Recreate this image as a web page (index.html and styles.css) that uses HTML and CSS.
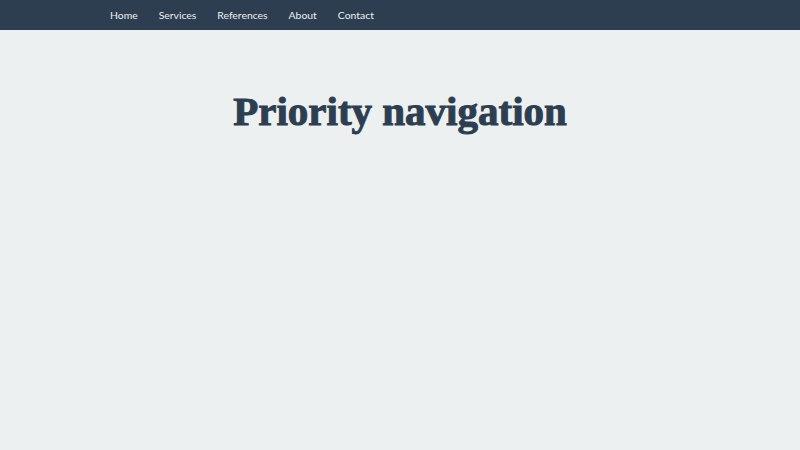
FILE: index.html
```html
<!DOCTYPE html>
<html lang="en">
<head>
  <meta charset="UTF-8" />
  <title>Priority navigation</title>
  <link rel="stylesheet" href="styles.css">
</head>
<body>
  <nav class="site-nav">
    <ul class="nav-list">
      <li><a href="#">Home</a></li>
      <li><a href="#">Services</a></li>
      <li><a href="#">References</a></li>
      <li><a href="#">About</a></li>
      <li><a href="#">Contact</a></li>
    </ul>
  </nav>

  <main class="content">
    <h1 class="title">Priority navigation</h1>
  </main>
</body>
</html>
```

FILE: styles.css
```css
/* Barra de navegação simples + título */
body {
  margin: 0;
  padding: 0;
  font-family: "Lato", sans-serif;
  background: #ecf0f1;
  color: #2c3e50;
}

.site-nav {
  background-color: #2c3e50;
  height: 30px;
}

.nav-list {
  list-style: none;
  margin: 0 auto;
  padding: 0 10px;
  max-width: 580px;
  display: flex;
  gap: 21px;
  height: 100%;
  align-items: center;
}

.nav-list a {
  display: block;
  color: #ecf0f1;
  text-decoration: none;
  font-size: 10.4px;
}

.content {
  text-align: center;
  padding-top: 57px;
}

.title {
  margin: 0;
  font-family: "Liberation Serif", serif;
  font-weight: bold;
  font-size: 41px;
  line-height: 48px;
  -webkit-text-stroke: 1px #2c3e50;
}
```
